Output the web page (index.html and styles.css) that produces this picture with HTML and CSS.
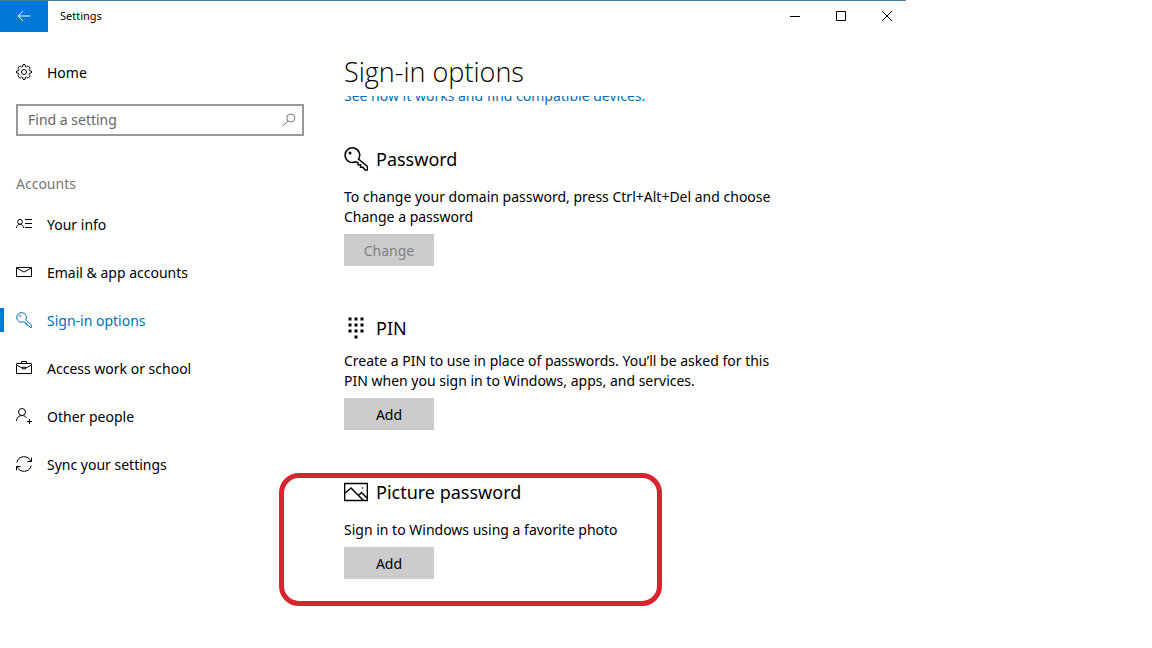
FILE: index.html
```html
<!DOCTYPE html>
<html lang="en">
<head>
  <meta charset="UTF-8">
  <title>Settings</title>
  <link rel="stylesheet" href="styles.css">
</head>
<body>
  <div class="window">
    <header class="titlebar">
      <button class="back" aria-label="Back">
        <svg width="14" height="12" viewBox="0 0 14 12"><path d="M1 6h12M6 1L1 6l5 5"/></svg>
      </button>
      <span class="title">Settings</span>
      <div class="window-buttons">
        <button aria-label="Minimize">
          <svg width="10" height="10" viewBox="0 0 10 10"><path d="M0 5.5h10"/></svg>
        </button>
        <button aria-label="Maximize">
          <svg width="10" height="10" viewBox="0 0 10 10"><path d="M.5.5h9v9h-9z"/></svg>
        </button>
        <button aria-label="Close">
          <svg width="10" height="10" viewBox="0 0 10 10"><path d="M0 0l10 10M10 0L0 10"/></svg>
        </button>
      </div>
    </header>

    <div class="content">
      <nav class="sidebar">
        <a href="#" class="nav-item">
          <svg class="icon" viewBox="0 0 16 16">
            <path d="M6.7 2.5L7 .6h2l.3 1.9 1.1.5L12 1.8 14.2 4 13 5.6l.5 1.1 1.9.3v2l-1.9.3-.5 1.1 1.2 1.6-2.2 2.2-1.6-1.2-1.1.5L9 15.4H7l-.3-1.9-1.1-.5L4 14.2 1.8 12 3 10.4l-.5-1.1L.6 9V7l1.9-.3L3 5.6 1.8 4 4 1.8 5.6 3z"/>
            <circle cx="8" cy="8" r="2.5"/>
          </svg>
          <span>Home</span>
        </a>

        <div class="search">
          <input type="text" placeholder="Find a setting" aria-label="Find a setting">
          <svg width="14" height="14" viewBox="0 0 14 14"><circle cx="8.8" cy="5" r="4"/><path d="M6 7.8L.8 13"/></svg>
        </div>

        <h2 class="group">Accounts</h2>

        <a href="#" class="nav-item">
          <svg class="icon" viewBox="0 0 16 16">
            <circle cx="4" cy="5.8" r="2.4"/>
            <path d="M.5 12c0-2.2 1.5-3.7 3.5-3.7s3.5 1.5 3.5 3.7M9 3.5h7M9 7.5h7M9 11.5h7"/>
          </svg>
          <span>Your info</span>
        </a>
        <a href="#" class="nav-item">
          <svg class="icon" viewBox="0 0 16 16"><path d="M.5 3.5h15v9H.5zM.5 4L8 8l7.5-4"/></svg>
          <span>Email &amp; app accounts</span>
        </a>
        <a href="#" class="nav-item active">
          <svg class="icon" viewBox="0 0 24 24">
            <path class="key" d="M14.5 12.2a7.3 7.3 0 1 0-3 2.6l2.5.7v2.3h2.5v2.5h2.5L21 23h2.5v-3.5z"/>
            <circle cx="6" cy="6" r="1.2"/>
          </svg>
          <span>Sign-in options</span>
        </a>
        <a href="#" class="nav-item">
          <svg class="icon" viewBox="0 0 16 16"><path d="M.5 3.5h15v10H.5zM5.5 3.5v-2h5v2M.5 5L6 8M15.5 5L10 8M6.5 7.2h3v1.6h-3z"/></svg>
          <span>Access work or school</span>
        </a>
        <a href="#" class="nav-item">
          <svg class="icon" viewBox="0 0 16 16">
            <circle cx="6" cy="4" r="3.5"/>
            <path d="M.5 13c0-3.3 2.4-5.500 5.500-5.500 2 0 3.600.9 4.500 2.400M13.500 11v5M11 13.500h5"/>
          </svg>
          <span>Other people</span>
        </a>
        <a href="#" class="nav-item">
          <svg class="icon" viewBox="0 0 16 16"><path d="M.8 6.5a7.3 7.3 0 0 1 14-1M15.5 1.500v4h-4M15.200 9.500a7.300 7.300 0 0 1-14 1M.5 14.500v-4h4"/></svg>
          <span>Sync your settings</span>
        </a>
      </nav>

      <main class="main">
        <h1>Sign-in options</h1>
        <div class="scrolled">
          <a href="#">See how it works and find compatible devices.</a>
        </div>

        <section class="option">
          <h2>
            <svg viewBox="0 0 24 24">
              <path d="M14.5 12.2a7.3 7.3 0 1 0-3 2.6l2.5.7v2.3h2.5v2.5h2.5L21 23h2.5v-3.5z"/>
              <circle class="solid" cx="6" cy="6" r="1.5"/>
            </svg>
            Password
          </h2>
          <p>To change your domain password, press Ctrl+Alt+Del and choose Change a password</p>
          <button disabled>Change</button>
        </section>

        <section class="option compact">
          <h2>
            <svg viewBox="0 0 24 24">
              <path class="dots" d="M4.5 3h16M4.5 9h16M4.5 15h16M10.5 21h3"/>
            </svg>
            PIN
          </h2>
          <p>Create a PIN to use in place of passwords. You’ll be asked for this PIN when you sign in to Windows, apps, and services.</p>
          <button>Add</button>
        </section>

        <section class="option highlighted">
          <h2>
            <svg viewBox="0 0 24 24">
              <path d="M.6 3.6h22.8v16.8H.6zM.6 13.5L7 8l12 12M14.5 15.5l3-3 6 6"/>
              <circle class="solid" cx="18.5" cy="8" r=".8"/>
            </svg>
            Picture password
          </h2>
          <p>Sign in to Windows using a favorite photo</p>
          <button>Add</button>
        </section>
      </main>
    </div>
  </div>
</body>
</html>
```
FILE: styles.css
```css
* {
  box-sizing: border-box;
}

body {
  margin: 0;
  background: white;
  color: black;
  font-family: "Noto Sans", "Open Sans", sans-serif;
  font-size: 14px;
  line-height: 20px;
}

h1, h2, p {
  margin: 0;
  font-weight: normal;
}

a {
  color: #0070b8;
  text-decoration: none;
}

button {
  border: none;
  font-family: inherit;
  font-size: 14px;
}

svg {
  flex-shrink: 0;
  fill: none;
  stroke: currentColor;
}

.window {
  max-width: 906px;
}

.titlebar {
  display: flex;
  height: 32px;
  border-top: 1px solid #4e7f9d;
}

.back {
  display: flex;
  align-items: center;
  justify-content: center;
  width: 48px;
  padding: 0 0 2px;
  background: #0078d7;
  color: white;
}

.title {
  margin-left: 12px;
  font-size: 11px;
  line-height: 30px;
}

.window-buttons {
  display: flex;
  gap: 16px;
  margin-left: auto;
  padding-right: 4px;
}

.window-buttons button {
  display: flex;
  align-items: center;
  justify-content: center;
  width: 30px;
  height: 30px;
  padding: 0;
  background: none;
  color: black;
}

.content {
  display: flex;
}

.sidebar {
  flex: 0 0 320px;
  padding-top: 16px;
}

.nav-item {
  display: flex;
  align-items: center;
  gap: 15px;
  height: 48px;
  padding-left: 16px;
  color: black;
}

.nav-item span {
  padding-top: 2px;
}

.nav-item.active {
  color: #0070b8;
  background: linear-gradient(#0078d7, #0078d7) left center / 4px 24px no-repeat;
}

.icon {
  width: 16px;
  height: 16px;
}

.icon .key {
  stroke-width: 1.5;
}

.search {
  display: flex;
  align-items: center;
  height: 32px;
  margin: 8px 16px 32px;
  padding: 0 6px 0 10px;
  border: 2px solid #999999;
  color: #777777;
}

.search input {
  flex: 1;
  min-width: 0;
  padding: 0 0 2px;
  border: none;
  outline: none;
  background: none;
  font-family: inherit;
  font-size: 14px;
}

.search input::placeholder {
  color: #666666;
}

.group {
  height: 32px;
  padding-left: 16px;
  color: #767676;
  font-size: 14px;
  line-height: 32px;
}

.main {
  flex: 1;
  padding: 24px 24px 0;
}

h1 {
  height: 40px;
  font-family: "Open Sans", "Noto Sans", sans-serif;
  font-size: 27px;
  font-weight: 300;
  line-height: 32px;
}

/* the link is half scrolled under the heading */
.scrolled {
  display: flex;
  align-items: flex-end;
  height: 10px;
  margin-bottom: 41px;
  overflow: hidden;
}

.option {
  position: relative;
  max-width: 440px;
  margin-bottom: 50px;
}

.option h2 {
  display: flex;
  align-items: center;
  gap: 8px;
  margin-bottom: 16px;
  font-size: 18px;
  line-height: 24px;
}

.option.compact h2 {
  margin-bottom: 11px;
}

.option h2 svg {
  width: 24px;
  height: 24px;
  stroke-width: 1.5;
}

.option .solid {
  fill: currentColor;
  stroke: none;
}

.option .dots {
  stroke-width: 3;
  stroke-dasharray: 3 3;
}

.option button {
  display: block;
  width: 90px;
  height: 32px;
  margin-top: 7px;
  background: #cccccc;
  color: black;
}

.option button:disabled {
  color: #808080;
}

.highlighted::after {
  content: "";
  position: absolute;
  top: -7px;
  bottom: -27px;
  left: -65px;
  box-sizing: border-box;
  width: 383px;
  border: 5px solid #d9232e;
  border-radius: 20px;
  pointer-events: none;
}
```
